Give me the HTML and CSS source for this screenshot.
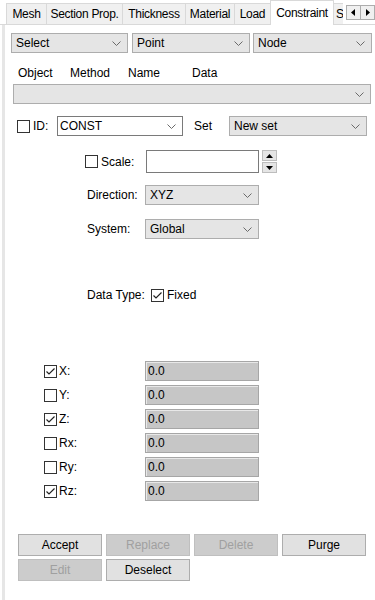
FILE: index.html
```html
<!DOCTYPE html>
<html>
<head>
<meta charset="utf-8">
<link rel="stylesheet" href="styles.css">
</head>
<body>
<div class="tabs">
  <div class="tab t-mesh">Mesh</div>
  <div class="tab t-sect">Section Prop.</div>
  <div class="tab t-thick">Thickness</div>
  <div class="tab t-mat">Material</div>
  <div class="tab t-load">Load</div>
  <div class="tab active t-con">Constraint</div>
  <div class="tab partial">S</div>
  <div class="arrows">
    <div class="arrow"><svg width="5" height="7" viewBox="0 0 5 7"><path d="M4 0 L0 3.5 L4 7 Z" fill="#000"/></svg></div>
    <div class="arrow"><svg width="5" height="7" viewBox="0 0 5 7"><path d="M1 0 L5 3.5 L1 7 Z" fill="#000"/></svg></div>
  </div>
</div>
<div class="panel">
  <div class="row top-selects">
    <div class="select grey w117"><span>Select</span><svg class="chev" width="9" height="5" viewBox="0 0 9 5"><path d="M0.5 0.5 L4.5 4.5 L8.5 0.5" fill="none" stroke="#6a6a6a" stroke-width="1"/></svg></div>
    <div class="select grey w118"><span>Point</span><svg class="chev" width="9" height="5" viewBox="0 0 9 5"><path d="M0.5 0.5 L4.5 4.5 L8.5 0.5" fill="none" stroke="#6a6a6a" stroke-width="1"/></svg></div>
    <div class="select grey w119"><span>Node</span><svg class="chev" width="9" height="5" viewBox="0 0 9 5"><path d="M0.5 0.5 L4.5 4.5 L8.5 0.5" fill="none" stroke="#6a6a6a" stroke-width="1"/></svg></div>
  </div>
  <div class="row cols">
    <span class="c-object">Object</span>
    <span class="c-method">Method</span>
    <span class="c-name">Name</span>
    <span>Data</span>
  </div>
  <div class="select grey wide"><span></span><svg class="chev" width="9" height="5" viewBox="0 0 9 5"><path d="M0.5 0.5 L4.5 4.5 L8.5 0.5" fill="none" stroke="#6a6a6a" stroke-width="1"/></svg></div>

  <div class="row id-row">
    <span class="cb"></span><span class="id-lbl">ID:</span>
    <div class="select white const"><span>CONST</span><svg class="chev" width="9" height="5" viewBox="0 0 9 5"><path d="M0.5 0.5 L4.5 4.5 L8.5 0.5" fill="none" stroke="#6a6a6a" stroke-width="1"/></svg></div>
    <span class="set-lbl">Set</span>
    <div class="select grey newset"><span>New set</span><svg class="chev" width="9" height="5" viewBox="0 0 9 5"><path d="M0.5 0.5 L4.5 4.5 L8.5 0.5" fill="none" stroke="#6a6a6a" stroke-width="1"/></svg></div>
  </div>

  <div class="row scale-row">
    <span class="cb"></span><span class="scale-lbl">Scale:</span>
    <div class="textbox"></div>
    <div class="spin">
      <div class="spin-btn"><svg width="7" height="4" viewBox="0 0 7 4"><path d="M0 4 L3.5 0 L7 4 Z" fill="#000"/></svg></div>
      <div class="spin-btn"><svg width="7" height="4" viewBox="0 0 7 4"><path d="M0 0 L3.5 4 L7 0 Z" fill="#000"/></svg></div>
    </div>
  </div>

  <div class="row field-row dir-row">
    <span class="field-lbl">Direction:</span>
    <div class="select grey mid"><span>XYZ</span><svg class="chev" width="9" height="5" viewBox="0 0 9 5"><path d="M0.5 0.5 L4.5 4.5 L8.5 0.5" fill="none" stroke="#6a6a6a" stroke-width="1"/></svg></div>
  </div>
  <div class="row field-row sys-row">
    <span class="field-lbl">System:</span>
    <div class="select grey mid"><span>Global</span><svg class="chev" width="9" height="5" viewBox="0 0 9 5"><path d="M0.5 0.5 L4.5 4.5 L8.5 0.5" fill="none" stroke="#6a6a6a" stroke-width="1"/></svg></div>
  </div>

  <div class="row dtype-row">
    <span class="dtype-lbl">Data Type:</span>
    <span class="cb checked"><svg width="11" height="11" viewBox="0 0 11 11"><path d="M1.5 5.5 L4 8 L9.5 2.5" fill="none" stroke="#222" stroke-width="1.2"/></svg></span>
    <span class="fixed-lbl">Fixed</span>
  </div>

  <div class="dofs">
    <div class="dof"><span class="cb checked"><svg width="11" height="11" viewBox="0 0 11 11"><path d="M1.5 5.5 L4 8 L9.5 2.5" fill="none" stroke="#222" stroke-width="1.2"/></svg></span><span class="dof-lbl">X:</span><div class="valbox">0.0</div></div>
    <div class="dof"><span class="cb"></span><span class="dof-lbl">Y:</span><div class="valbox">0.0</div></div>
    <div class="dof"><span class="cb checked"><svg width="11" height="11" viewBox="0 0 11 11"><path d="M1.5 5.5 L4 8 L9.5 2.5" fill="none" stroke="#222" stroke-width="1.2"/></svg></span><span class="dof-lbl">Z:</span><div class="valbox">0.0</div></div>
    <div class="dof"><span class="cb"></span><span class="dof-lbl">Rx:</span><div class="valbox">0.0</div></div>
    <div class="dof"><span class="cb"></span><span class="dof-lbl">Ry:</span><div class="valbox">0.0</div></div>
    <div class="dof"><span class="cb checked"><svg width="11" height="11" viewBox="0 0 11 11"><path d="M1.5 5.5 L4 8 L9.5 2.5" fill="none" stroke="#222" stroke-width="1.2"/></svg></span><span class="dof-lbl">Rz:</span><div class="valbox">0.0</div></div>
  </div>

  <div class="buttons">
    <div class="btn">Accept</div>
    <div class="btn disabled">Replace</div>
    <div class="btn disabled">Delete</div>
    <div class="btn">Purge</div>
    <div class="btn disabled">Edit</div>
    <div class="btn">Deselect</div>
  </div>
</div>
</body>
</html>
```

FILE: styles.css
```css
* { box-sizing: border-box; }
html, body { margin: 0; padding: 0; background: #fff; }
body {
  font-family: "Liberation Sans", Arial, sans-serif;
  font-size: 12px;
  color: #000;
  width: 375px;
  height: 600px;
  overflow: hidden;
}

/* tabs */
.tabs {
  display: flex;
  align-items: flex-end;
  height: 25px;
  padding-left: 6px;
  border-bottom: 1px solid #d9d9d9;
  position: relative;
}
.tab {
  height: 21px;
  line-height: 20px;
  padding: 0;
  text-align: center;
  letter-spacing: -0.3px;
  background: #f0f0f0;
  border: 1px solid #d9d9d9;
  border-bottom: none;
  margin-right: -1px;
  white-space: nowrap;
  overflow: hidden;
}
.t-mesh { width: 41px; }
.t-sect { width: 77px; }
.t-thick { width: 64px; }
.t-mat { width: 50px; }
.t-load { width: 37px; }
.t-con { width: 64px; }
.tab.active {
  height: 25px;
  line-height: 24px;
  background: #fff;
  position: relative;
  margin-bottom: -1px;
  z-index: 1;
}
.tab.partial {
  width: 10px;
  text-align: left;
  padding: 0 0 0 2px;
  border-right: none;
}
.arrows {
  position: absolute;
  right: 0;
  top: 5px;
  display: flex;
  z-index: 2;
}
.arrow {
  width: 15px;
  height: 15px;
  background: #f0f0f0;
  border: 1px solid #adadad;
  display: flex;
  align-items: center;
  justify-content: center;
  margin-left: -1px;
}

/* panel */
.panel {
  margin-left: 2px;
  border-left: 3px solid #e6e6e6;
  padding-left: 6px;
  height: 575px;
}
.row { display: flex; align-items: center; }

.select {
  height: 20px;
  display: flex;
  align-items: center;
  justify-content: space-between;
  padding: 0 6px 0 4px;
  border: 1px solid #adadad;
}
.select.grey { background: #e5e5e5; }
.select.white { background: #fff; border-color: #7a7a7a; }
.chev { flex: none; }

.top-selects { padding-top: 8px; }
.w117 { width: 117px; }
.w118 { width: 118px; margin-left: 4px; }
.w119 { width: 119px; margin-left: 3px; }

.cols { margin-top: 13px; height: 14px; padding-left: 7px; }
.c-object { width: 52px; }
.c-method { width: 58px; }
.c-name { width: 64px; }

.wide { width: 358px; margin-left: 2px; margin-top: 4px; }

.cb {
  width: 13px;
  height: 13px;
  border: 1px solid #333;
  background: #fff;
  flex: none;
  display: flex;
  align-items: center;
  justify-content: center;
}

.id-row { margin-top: 12px; height: 20px; padding-left: 6px; }
.id-lbl { margin-left: 3px; width: 24px; }
.const { width: 126px; padding-left: 2px; }
.set-lbl { margin-left: 11px; width: 35px; }
.newset { width: 138px; }

.scale-row { margin-top: 14px; height: 23px; padding-left: 74px; }
.scale-lbl { margin-left: 3px; width: 45px; }
.textbox {
  width: 113px;
  height: 23px;
  border: 1px solid #7a7a7a;
  background: #fff;
}
.spin { margin-left: 3px; display: flex; flex-direction: column; gap: 1px; }
.spin-btn {
  width: 15px;
  height: 11px;
  background: #e5e5e5;
  border: 1px solid #bdbdbd;
  display: flex;
  align-items: center;
  justify-content: center;
}

.field-row { padding-left: 76px; height: 20px; }
.dir-row { margin-top: 12px; }
.sys-row { margin-top: 14px; }
.field-lbl { width: 58px; }
.mid { width: 114px; }

.dtype-row { margin-top: 49px; height: 14px; padding-left: 76px; }
.dtype-lbl { width: 64px; }
.fixed-lbl { margin-left: 3px; }

.dofs {
  margin-top: 59px;
  display: flex;
  flex-direction: column;
  gap: 4px;
  padding-left: 33px;
}
.dof { display: flex; align-items: center; height: 20px; }
.dof-lbl { margin-left: 2px; width: 86px; }
.valbox {
  width: 114px;
  height: 20px;
  background: #c6c6c6;
  border: 1px solid #a6a6a6;
  box-shadow: inset 1px 1px 0 #e8e8e8;
  padding-left: 2px;
  line-height: 18px;
}

.buttons {
  margin-top: 33px;
  display: grid;
  grid-template-columns: repeat(4, 84px);
  column-gap: 4px;
  row-gap: 3px;
  padding-left: 7px;
}
.btn {
  height: 22px;
  line-height: 20px;
  text-align: center;
  background: #e1e1e1;
  border: 1px solid #adadad;
}
.btn.disabled {
  background: #cccccc;
  border-color: #bfbfbf;
  color: #a0a0a0;
}
```
